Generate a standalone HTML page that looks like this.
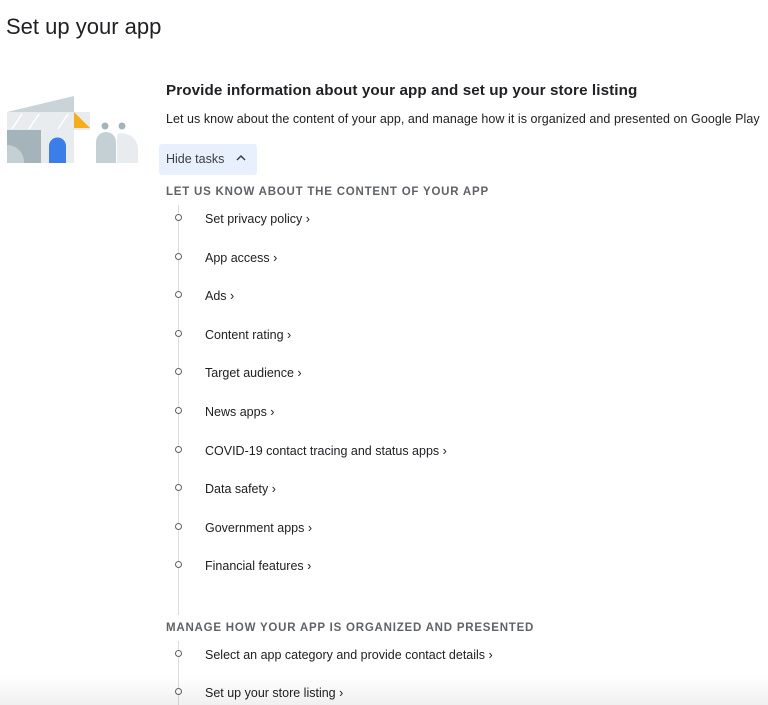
<!DOCTYPE html>
<html><head><style>
body{margin:0;width:768px;height:705px;background:#fff;font-family:"Liberation Sans",Arial,sans-serif;color:#202124;position:relative;overflow:hidden}
.a{position:absolute;white-space:nowrap}
.item{position:absolute;left:205px;font-size:12.5px;color:#202124}
.dot{position:absolute;left:175px;width:5px;height:5px;border:1px solid #5f6368;border-radius:50%;background:#fff}
.h{position:absolute;left:166px;font-size:11.5px;font-weight:bold;letter-spacing:0.78px;color:#5f6368}
</style></head><body>
<div class="a" style="left:6px;top:14px;font-size:22px">Set up your app</div>
<svg class="a" style="left:0;top:90px" width="145" height="80" viewBox="0 90 145 80">
<polygon points="7,112 74,96 74,112" fill="#c9d3d8"/>
<rect x="7" y="112" width="83" height="18" fill="#e8ecee"/>
<path d="M12,129 L22,114 M29,129 L39,114 M58,129 L68,114" stroke="#fff" stroke-width="1.5"/>
<polygon points="74,112 90,128 74,128" fill="#f6ad1b"/>
<rect x="7" y="130" width="34" height="33" fill="#a5b3ba"/>
<path d="M7,145 A17,17 0 0 1 24,163 L7,163Z" fill="#c5d0d5"/>
<rect x="41" y="130" width="33" height="33" fill="#e8ecee"/>
<path d="M49,163 V146 A8.5,8.5 0 0 1 66,146 V163Z" fill="#3b7de9"/>
<circle cx="105" cy="126" r="3.5" fill="#a5b3ba"/><circle cx="122" cy="126" r="3.5" fill="#a5b3ba"/>
<path d="M96,163 V142 A10,10 0 0 1 116,142 V163Z" fill="#c5d0d5"/>
<path d="M117,163 V136 Q117,133 121,133 Q138,135 138,150 V163Z" fill="#e8ecee"/>
</svg>
<div class="a" style="left:166px;top:82px;font-size:15.2px;font-weight:bold;letter-spacing:0.1px;color:#202124">Provide information about your app and set up your store listing</div>
<div class="a" style="left:166px;top:112px;font-size:12.5px;letter-spacing:0.05px">Let us know about the content of your app, and manage how it is organized and presented on Google Play</div>
<div class="a" style="left:159px;top:144px;width:98px;height:31px;background:#e8f0fe;border-radius:3px"></div>
<div class="a" style="left:166px;top:152px;font-size:12.5px;color:#3c4043">Hide tasks</div>
<svg class="a" style="left:235px;top:153px" width="12" height="10"><path d="M2,7 L6,3 L10,7" stroke="#3c4043" stroke-width="1.5" fill="none"/></svg>
<div class="h" style="top:186px">LET US KNOW ABOUT THE CONTENT OF YOUR APP</div>
<div class="a" style="left:178px;top:205px;width:1px;height:410px;background:#dadce0"></div>
<div class="a" style="left:178px;top:641px;width:1px;height:64px;background:#dadce0"></div>
<div class="dot" style="top:214px"></div><div class="item" style="top:212px">Set privacy policy ›</div>
<div class="dot" style="top:253px"></div><div class="item" style="top:251px">App access ›</div>
<div class="dot" style="top:291px"></div><div class="item" style="top:289px">Ads ›</div>
<div class="dot" style="top:330px"></div><div class="item" style="top:328px">Content rating ›</div>
<div class="dot" style="top:368px"></div><div class="item" style="top:366px">Target audience ›</div>
<div class="dot" style="top:407px"></div><div class="item" style="top:405px">News apps ›</div>
<div class="dot" style="top:446px"></div><div class="item" style="top:444px">COVID-19 contact tracing and status apps ›</div>
<div class="dot" style="top:484px"></div><div class="item" style="top:482px">Data safety ›</div>
<div class="dot" style="top:523px"></div><div class="item" style="top:521px">Government apps ›</div>
<div class="dot" style="top:561px"></div><div class="item" style="top:559px">Financial features ›</div>
<div class="h" style="top:622px">MANAGE HOW YOUR APP IS ORGANIZED AND PRESENTED</div>
<div class="dot" style="top:650px"></div><div class="item" style="top:648px">Select an app category and provide contact details ›</div>
<div class="dot" style="top:688px"></div><div class="item" style="top:686px">Set up your store listing ›</div>
<div class="a" style="left:0;top:675px;width:768px;height:30px;background:linear-gradient(rgba(0,0,0,0),rgba(0,0,0,0.06))"></div>
</body></html>
